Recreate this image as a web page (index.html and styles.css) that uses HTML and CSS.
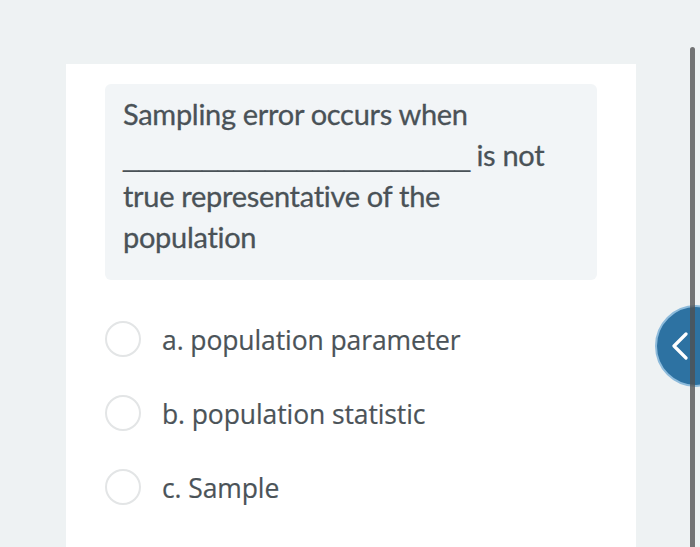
FILE: index.html
```html
<!DOCTYPE html>
<html>
<head>
<meta charset="utf-8">
<link rel="stylesheet" href="styles.css">
</head>
<body>
<div class="card">
  <div class="question">
    <p>Sampling error occurs when <span class="blank">______________________</span>is not true representative of the population</p>
  </div>
  <ul class="options">
    <li class="option"><span class="radio"></span><span class="label">a. population parameter</span></li>
    <li class="option"><span class="radio"></span><span class="label">b. population statistic</span></li>
    <li class="option"><span class="radio"></span><span class="label">c. Sample</span></li>
  </ul>
</div>
<button class="nav-toggle" aria-label="Open navigation">
  <svg width="18" height="28" viewBox="0 0 18 28"><path d="M15 2 L3 14 L15 26" fill="none" stroke="#fff" stroke-width="3.2" stroke-linecap="round" stroke-linejoin="round"/></svg>
</button>
<div class="scrollbar"></div>
</body>
</html>
```
FILE: styles.css
```css
html, body {
  margin: 0;
  padding: 0;
  height: 100%;
  overflow: hidden;
}
body {
  background: #eef2f3;
  font-family: Lato, "Open Sans", sans-serif;
  color: #4b5358;
}
.card {
  margin: 64px 0 0 66px;
  width: 570px;
  height: 483px;
  box-sizing: border-box;
  background: #ffffff;
  padding: 20px 39px 0 39px;
}
.question {
  background: #f2f5f7;
  border-radius: 6px;
  padding: 9px 20px 23px 18px;
}
.question p {
  margin: 0;
  max-width: 430px;
  font-size: 29px;
  line-height: 41px;
  letter-spacing: -0.3px;
  color: #4a5257;
  -webkit-text-stroke: 0.3px #4a5257;
}
.blank {
  font-family: "Liberation Sans", Arial, sans-serif;
  font-size: 28.4px;
  line-height: 20px;
  letter-spacing: 0;
  margin-right: 6px;
  -webkit-text-stroke: 0;
}
.options {
  list-style: none;
  margin: 22px 0 0 0;
  padding: 0;
}
.option {
  display: flex;
  align-items: center;
  height: 74px;
  gap: 21px;
}
.radio {
  width: 36px;
  height: 36px;
  box-sizing: border-box;
  border: 2px solid #e3e5e6;
  border-radius: 50%;
  background: #fff;
  flex: none;
}
.label {
  font-family: "Open Sans", Lato, sans-serif;
  font-size: 26.5px;
  color: #4b5358;
  letter-spacing: -0.1px;
  padding-top: 2px;
  -webkit-text-stroke: 0.2px #4b5358;
}
.nav-toggle {
  position: fixed;
  left: 655px;
  top: 305px;
  width: 82px;
  height: 82px;
  border-radius: 50%;
  border: 2px solid #8dbbdb;
  background: #2d72a2;
  display: flex;
  align-items: center;
  justify-content: flex-start;
  padding: 0 0 0 14px;
  box-sizing: border-box;
}
.nav-toggle svg {
  display: block;
}
.scrollbar {
  position: fixed;
  left: 690px;
  top: 47px;
  width: 5px;
  bottom: 0;
  border-radius: 3px 3px 0 0;
  background: rgba(80, 80, 80, 0.78);
}
```
